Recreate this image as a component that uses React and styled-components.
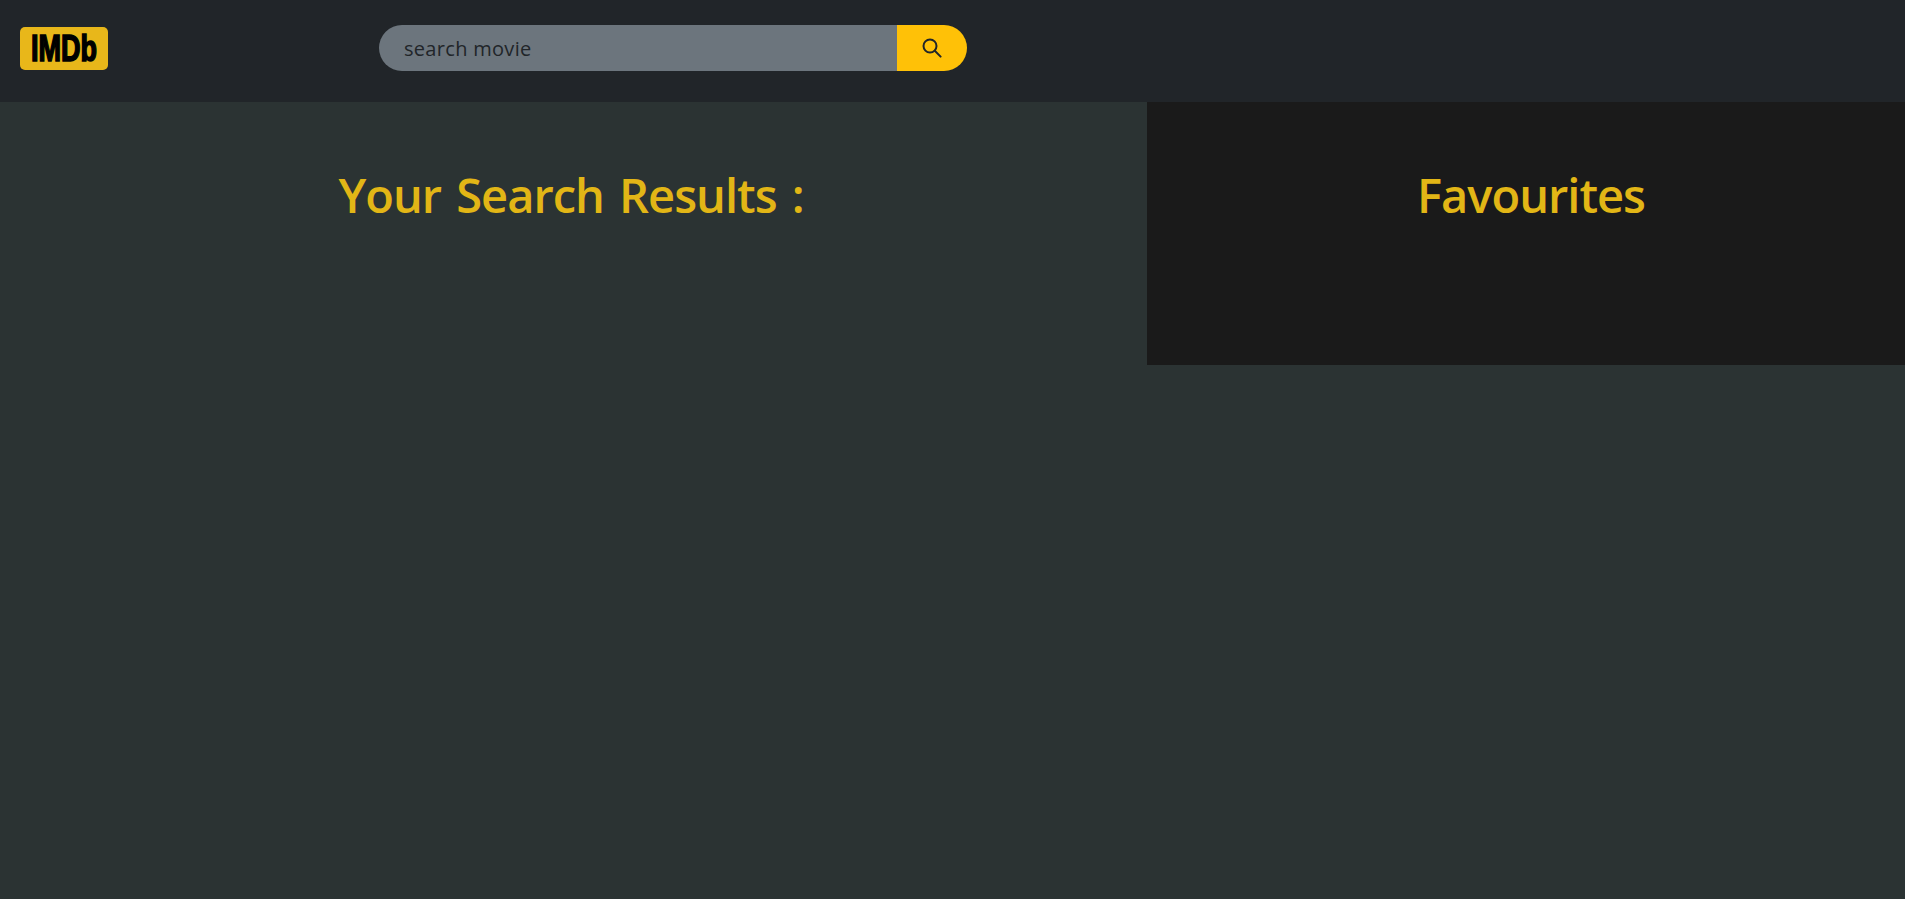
import styled, { createGlobalStyle } from "styled-components";

const GlobalStyle = createGlobalStyle`
  * {
    box-sizing: border-box;
  }
  body {
    margin: 0;
    background-color: #2b3333;
    font-family: "Open Sans", "Noto Sans", sans-serif;
  }
`;

const App = () => {
  return (
    <Container>
      <GlobalStyle />
      <Navbar>
        <Logo>
          <LogoText>IMDb</LogoText>
        </Logo>
        <SearchForm>
          <SearchInput placeholder="search movie" />
          <SearchButton type="button" aria-label="search">
            <svg width="20" height="20" viewBox="0 0 20 20" fill="none" stroke="#212529" strokeWidth="2">
              <circle cx="8" cy="8" r="6.5" />
              <path d="M12.8 12.8 L18.6 18.6" strokeLinecap="round" />
            </svg>
          </SearchButton>
        </SearchForm>
      </Navbar>
      <Main>
        <Results>
          <Title>Your Search Results :</Title>
        </Results>
        <Favourites>
          <Title>Favourites</Title>
        </Favourites>
      </Main>
    </Container>
  );
};

export default App;

const Container = styled.div`
  min-height: 899px;
  background-color: #2b3333;
`;

const Navbar = styled.nav`
  height: 102px;
  padding: 0 0 6px 20px;
  display: flex;
  align-items: center;
  background-color: #212529;
`;

const Logo = styled.div`
  width: 88px;
  height: 43px;
  margin-right: 271px;
  padding-top: 1px;
  display: flex;
  align-items: center;
  justify-content: center;
  border-radius: 5px;
  background-color: #e8b71a;
`;

const LogoText = styled.span`
  display: inline-block;
  transform: scaleX(0.75);
  color: #000;
  font-family: "Liberation Sans", sans-serif;
  font-size: 36px;
  font-weight: 700;
  line-height: 1;
  -webkit-text-stroke: 1.6px #000;
`;

const SearchForm = styled.form`
  width: 588px;
  height: 46px;
  display: flex;
`;

const SearchInput = styled.input`
  flex: 1;
  min-width: 0;
  padding: 0 25px;
  border: none;
  outline: none;
  border-radius: 23px 0 0 23px;
  background-color: #6c757d;
  color: #212529;
  font-family: "Open Sans", sans-serif;
  font-size: 20px;
  letter-spacing: 0.3px;

  &::placeholder {
    color: #212529;
    opacity: 1;
  }
`;

const SearchButton = styled.button`
  width: 70px;
  padding: 0;
  display: flex;
  align-items: center;
  justify-content: center;
  border: none;
  border-radius: 0 23px 23px 0;
  background-color: #ffc107;
`;

const Main = styled.main`
  display: flex;
  align-items: flex-start;
`;

const Results = styled.section`
  flex: 1;
  min-width: 0;
  padding: 59px 5px 0 0;
`;

const Favourites = styled.section`
  width: 758px;
  height: 263px;
  padding: 59px 0 0 10px;
  background-color: #1a1a1a;
`;

const Title = styled.h1`
  margin: 0;
  color: #e2b616;
  font-size: 47px;
  font-weight: 600;
  letter-spacing: -1px;
  word-spacing: 4px;
  line-height: 68px;
  text-align: center;
`;
